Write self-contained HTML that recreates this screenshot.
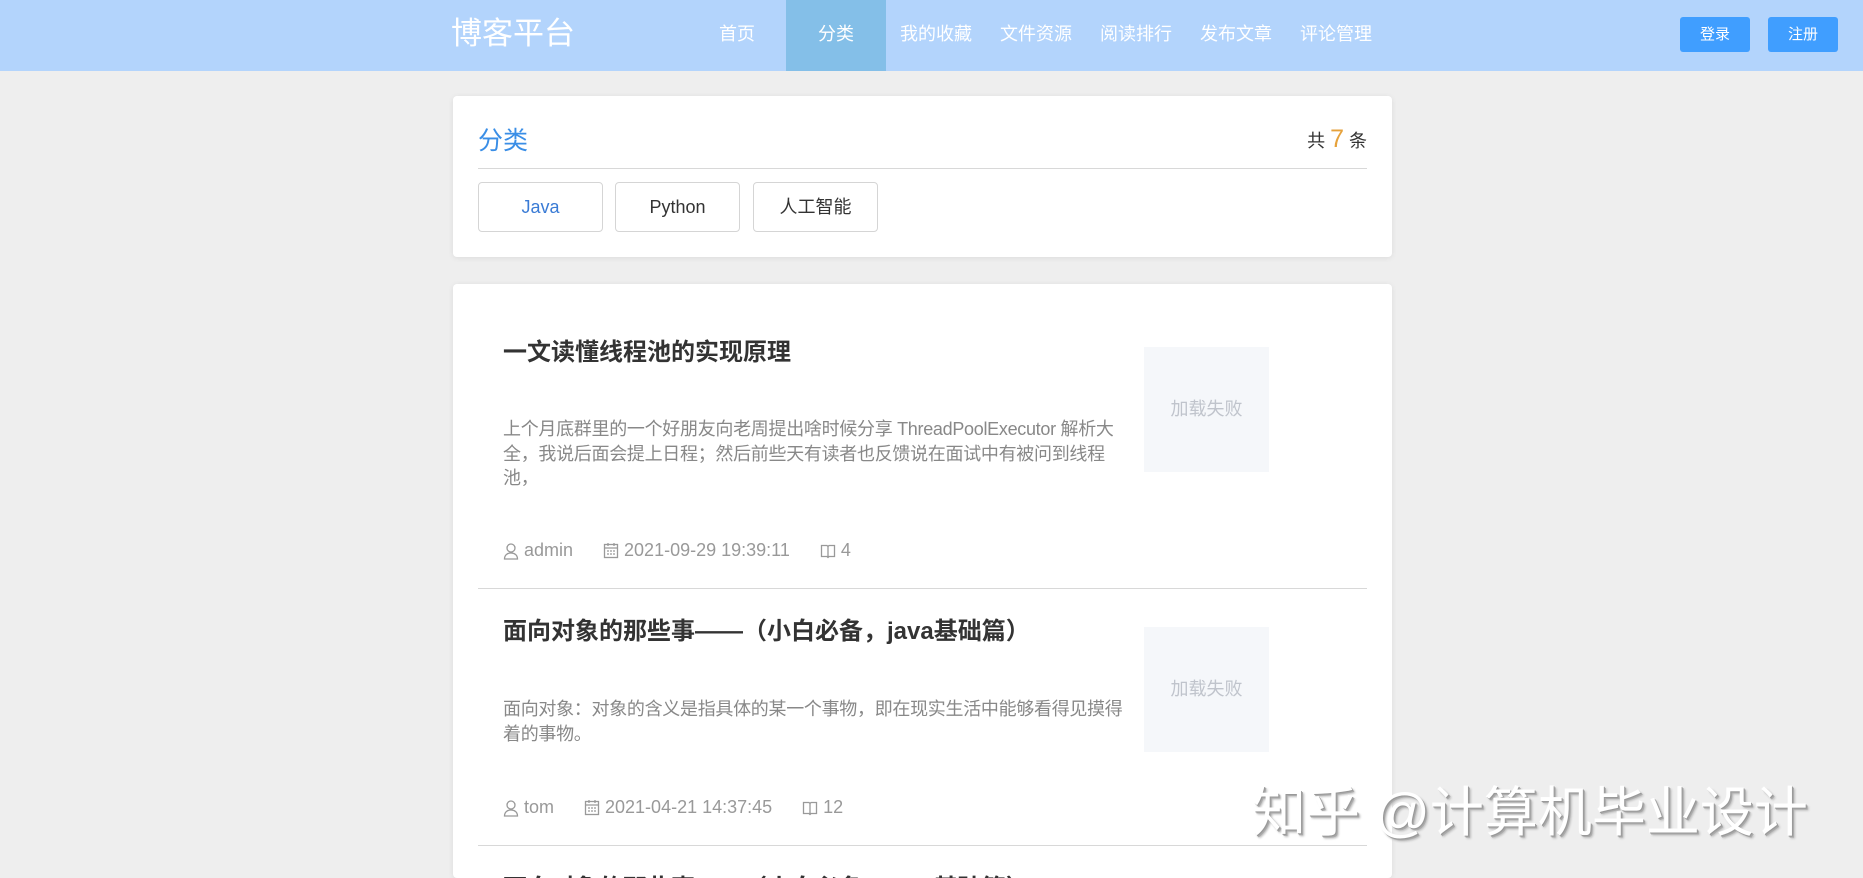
<!DOCTYPE html>
<html><head><meta charset="utf-8">
<style>
*{margin:0;padding:0;box-sizing:border-box}
html{width:1863px;height:878px;overflow:hidden}
body{width:1863px;height:878px;overflow:hidden;background:#eeeeee;font-family:"Liberation Sans","Noto Sans CJK SC",sans-serif;position:relative}
.hdr{position:absolute;left:0;top:0;width:1863px;height:71px;background:#b3d4fc}
.logo{position:absolute;left:451px;top:14px;font-size:31px;color:#fff;line-height:40px}
.nav{position:absolute;top:0;height:71px;line-height:68px;font-size:18px;color:#fff;text-align:center;width:100px}
.nav.act{background:#84bfe8}
.btn{position:absolute;top:17px;width:70px;height:35px;background:#409eff;border-radius:3px;color:#fff;font-size:15px;text-align:center;line-height:35px}
.card{position:absolute;left:453px;width:939px;background:#fff;border-radius:4px;box-shadow:0 1px 6px rgba(0,0,0,.08);overflow:hidden}
.tag{position:absolute;top:86px;width:125px;height:50px;border:1px solid #d5d5d5;border-radius:4px;text-align:center;line-height:48px;font-size:18px;color:#333}
.title{position:absolute;left:50px;font-size:24px;font-weight:bold;color:#333;white-space:nowrap}
.desc{position:absolute;left:50px;width:612px;font-size:18px;line-height:24.5px;color:#888;letter-spacing:-0.3px}
.img{position:absolute;left:691px;width:125px;height:125px;background:#f5f7fa;color:#c0c4cc;font-size:18px;text-align:center;line-height:125px}
.meta{position:absolute;left:50px;font-size:18px;color:#999;white-space:nowrap;display:flex;align-items:center}
.meta svg{margin-right:5px}
.hr{position:absolute;left:25px;width:889px;height:1px;background:#d8d8d8}
.wm{position:absolute;left:1252px;top:768px;font-size:54px;color:#fff;white-space:nowrap;text-shadow:1px 1px 0 #999,2px 2px 0 #aaa,3px 3px 2px #bbb}
</style></head><body>
<div class="hdr">
<div class="logo">博客平台</div>
<div class="nav" style="left:687px">首页</div>
<div class="nav act" style="left:786px">分类</div>
<div class="nav" style="left:886px">我的收藏</div>
<div class="nav" style="left:986px">文件资源</div>
<div class="nav" style="left:1086px">阅读排行</div>
<div class="nav" style="left:1186px">发布文章</div>
<div class="nav" style="left:1286px">评论管理</div>
<div class="btn" style="left:1680px">登录</div>
<div class="btn" style="left:1768px">注册</div>
</div>

<div class="card" style="top:96px;height:161px">
<div style="position:absolute;left:25px;top:25px;font-size:25px;color:#3a8ee6">分类</div>
<div style="position:absolute;right:25px;top:28px;font-size:18px;color:#333;line-height:30px">共 <span style="color:#e6a23c;font-size:25px">7</span> 条</div>
<div class="hr" style="top:72px"></div>
<div class="tag" style="left:25px;color:#3a7bd5">Java</div>
<div class="tag" style="left:162px">Python</div>
<div class="tag" style="left:300px">人工智能</div>
</div>

<div class="card" style="top:284px;height:594px">
<div class="title" style="top:48px">一文读懂线程池的实现原理</div>
<div class="desc" style="top:133px">上个月底群里的一个好朋友向老周提出啥时候分享 ThreadPoolExecutor 解析大全，我说后面会提上日程；然后前些天有读者也反馈说在面试中有被问到线程池，</div>
<div class="img" style="top:63px">加载失败</div>
<div class="meta" style="top:256px">
<svg width="16" height="18" viewBox="0 0 16 18" fill="none" stroke="#999" stroke-width="1.3"><circle cx="8" cy="6" r="4"/><path d="M1.5 17c0-4 3-6 6.5-6s6.5 2 6.5 6z"/></svg>admin
<span style="width:30px"></span>
<svg width="16" height="17" viewBox="0 0 16 17" fill="none" stroke="#999" stroke-width="1.3"><rect x="1.5" y="2.5" width="13" height="13"/><path d="M1.5 6h13M4 9h2M7 9h2M10 9h2M4 12h2M7 12h2M10 12h2M5 1v3M11 1v3"/></svg>2021-09-29 19:39:11
<span style="width:30px"></span>
<svg width="16" height="16" viewBox="0 0 16 16" fill="none" stroke="#999" stroke-width="1.3"><path d="M1.5 2.5h5.5l1 1 1-1h5.5v11h-5.5l-1 1-1-1h-5.5z M8 3.5v10.5"/></svg>4
</div>
<div class="hr" style="top:304px"></div>

<div class="title" style="top:327px">面向对象的那些事——（小白必备，java基础篇）</div>
<div class="desc" style="top:413px;width:622px">面向对象：对象的含义是指具体的某一个事物，即在现实生活中能够看得见摸得着的事物。</div>
<div class="img" style="top:343px">加载失败</div>
<div class="meta" style="top:513px">
<svg width="16" height="18" viewBox="0 0 16 18" fill="none" stroke="#999" stroke-width="1.3"><circle cx="8" cy="6" r="4"/><path d="M1.5 17c0-4 3-6 6.5-6s6.5 2 6.5 6z"/></svg>tom
<span style="width:30px"></span>
<svg width="16" height="17" viewBox="0 0 16 17" fill="none" stroke="#999" stroke-width="1.3"><rect x="1.5" y="2.5" width="13" height="13"/><path d="M1.5 6h13M4 9h2M7 9h2M10 9h2M4 12h2M7 12h2M10 12h2M5 1v3M11 1v3"/></svg>2021-04-21 14:37:45
<span style="width:30px"></span>
<svg width="16" height="16" viewBox="0 0 16 16" fill="none" stroke="#999" stroke-width="1.3"><path d="M1.5 2.5h5.5l1 1 1-1h5.5v11h-5.5l-1 1-1-1h-5.5z M8 3.5v10.5"/></svg>12
</div>
<div class="hr" style="top:561px"></div>
<div class="title" style="top:584px">面向对象的那些事——（小白必备，java基础篇）</div>
</div>

<div class="wm">知乎 @计算机毕业设计</div>
</body></html>
